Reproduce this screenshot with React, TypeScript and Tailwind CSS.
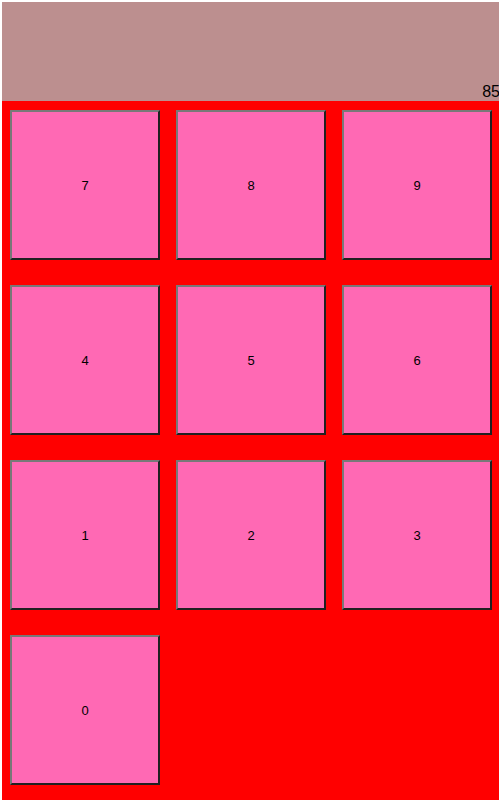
import React from "react";

const rows: (string | null)[][] = [
  ["7", "8", "9"],
  ["4", "5", "6"],
  ["1", "2", "3"],
  ["0", null, null],
];

export default function App() {
  return (
    <div className="bg-white h-[801px] overflow-hidden" style={{ fontFamily: '"Liberation Sans", Arial, sans-serif' }}>
      <div className="ml-[2px] pt-[2px] w-[498px]">
        <div className="h-[99px] bg-[#bc8f8f] flex items-end justify-end">
          <span className="text-[16px] leading-[18px] text-black">85</span>
        </div>
        <div className="bg-[#ff0000] h-[699px] pt-[9px] px-[8px] flex flex-col gap-[25px]">
          {rows.map((r, i) => (
            <div key={i} className="grid grid-cols-[150px_150px_150px] gap-[16px]">
              {r.map((k, j) =>
                k === null ? (
                  <div key={j} />
                ) : (
                  <button
                    key={j}
                    className="h-[150px] w-[150px] bg-[#ff69b4] border-2 border-t-[#787878] border-l-[#787878] border-b-[#202020] border-r-[#202020] text-[13px] leading-[16px] text-black flex items-center justify-center pt-[2px]"
                  >
                    {k}
                  </button>
                )
              )}
            </div>
          ))}
        </div>
      </div>
    </div>
  );
}
